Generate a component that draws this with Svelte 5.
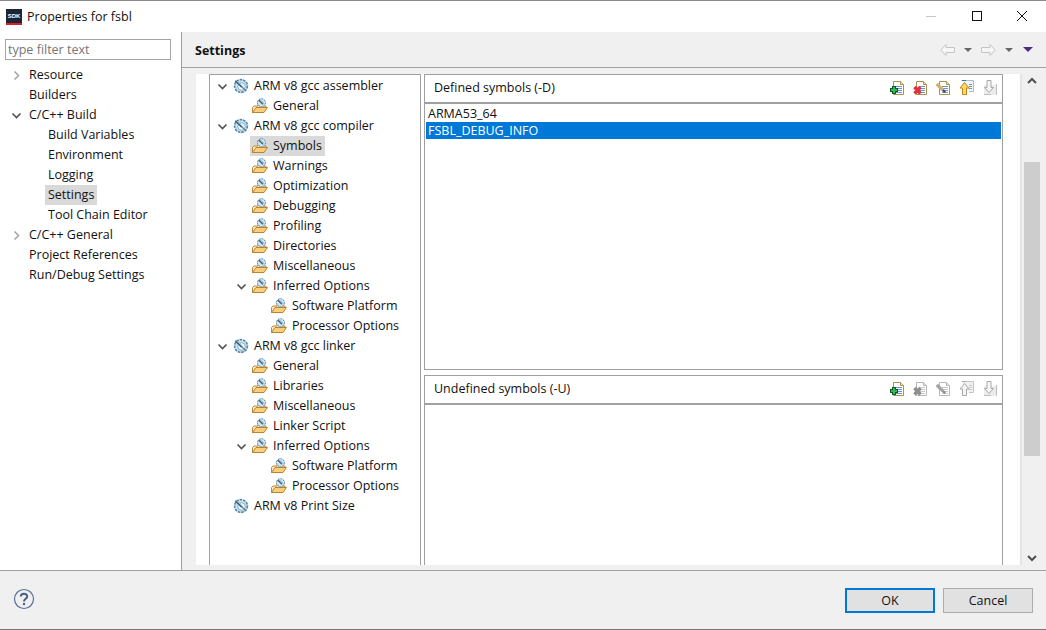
<script>
  const side = [
    { t: 'Resource', l: 0, c: 'r' }, { t: 'Builders', l: 0 }, { t: 'C/C++ Build', l: 0, c: 'd' },
    { t: 'Build Variables', l: 1 }, { t: 'Environment', l: 1 }, { t: 'Logging', l: 1 },
    { t: 'Settings', l: 1, s: true }, { t: 'Tool Chain Editor', l: 1 },
    { t: 'C/C++ General', l: 0, c: 'r' }, { t: 'Project References', l: 0 }, { t: 'Run/Debug Settings', l: 0 }
  ];
  const tree = [
    { t: 'ARM v8 gcc assembler', l: 0, c: 1, i: 'tool' }, { t: 'General', l: 1 },
    { t: 'ARM v8 gcc compiler', l: 0, c: 1, i: 'tool' }, { t: 'Symbols', l: 1, s: true }, { t: 'Warnings', l: 1 },
    { t: 'Optimization', l: 1 }, { t: 'Debugging', l: 1 }, { t: 'Profiling', l: 1 }, { t: 'Directories', l: 1 },
    { t: 'Miscellaneous', l: 1 }, { t: 'Inferred Options', l: 1, c: 1 }, { t: 'Software Platform', l: 2 }, { t: 'Processor Options', l: 2 },
    { t: 'ARM v8 gcc linker', l: 0, c: 1, i: 'tool' }, { t: 'General', l: 1 }, { t: 'Libraries', l: 1 }, { t: 'Miscellaneous', l: 1 },
    { t: 'Linker Script', l: 1 }, { t: 'Inferred Options', l: 1, c: 1 }, { t: 'Software Platform', l: 2 }, { t: 'Processor Options', l: 2 },
    { t: 'ARM v8 Print Size', l: 0, i: 'tool' }
  ];
</script>

{#snippet chev(kind)}
  <svg class="chev" width="11" height="11" viewBox="0 0 11 11">
    {#if kind === 'r'}
      <path d="M3.5 1.5 L7.5 5.5 L3.5 9.5" fill="none" stroke="#a6a6a6" stroke-width="1.6" />
    {:else}
      <path d="M1.5 3.5 L5.5 7.5 L9.5 3.5" fill="none" stroke="#505050" stroke-width="1.6" />
    {/if}
  </svg>
{/snippet}

{#snippet toolIcon()}
  <svg width="16" height="16" viewBox="0 0 16 16">
    <circle cx="8" cy="8" r="6.4" fill="#cfe2ee" stroke="#4f8bb0" stroke-width="1.6" stroke-dasharray="2.6 .9" />
    <circle cx="8.5" cy="8.5" r="3.8" fill="#f4f8fb" stroke="#86aec8" />
    <path d="M2.5 2.5 L9 9" stroke="#3f6482" stroke-width="2.2" />
    <path d="M3 2 L9.5 8.5" stroke="#c4d4e0" stroke-width=".7" />
    <path d="M9 9 L12.5 12.5" stroke="#6d8296" stroke-width="1.3" />
  </svg>
{/snippet}

{#snippet catIcon()}
  <svg width="16" height="16" viewBox="0 0 16 16">
    <path d="M.5 14.5 V9.5 L2 8 H6 V5 H12 V8 H14 V10 L11.5 14.5 Z" fill="#fde9c0" stroke="#b98a3c" />
    <path d="M.5 14.5 L4 9.5 H15.5 L12 14.5 Z" fill="#fbce7e" stroke="#b8842f" />
    <circle cx="9.5" cy="4.7" r="4" fill="#d5e5ef" stroke="#4f8bb0" stroke-dasharray="1.9 .7" />
    <path d="M6.8 2 L11 6.2" stroke="#3f6482" stroke-width="1.6" />
    <path d="M9 2.2 L12.2 5.4" stroke="#8fb0c8" stroke-width=".8" />
  </svg>
{/snippet}

{#snippet doc(dim)}
  <path d="M3.5 1.5 H10.5 L13.5 4.5 V14.5 H3.5 Z" fill="#fff" stroke={dim ? '#b8b8b8' : '#ad8f4e'} />
  <path d="M10.5 1.5 V4.5 H13.5" fill={dim ? '#e2e2e2' : '#f2dd9c'} stroke={dim ? '#b8b8b8' : '#ad8f4e'} />
  <path d="M6 6.5 H12 M6 8.5 H12 M6 10.5 H12 M6 12.5 H12" stroke={dim ? '#c8c8c8' : '#7096c6'} />
{/snippet}

{#snippet addIcon()}
  <svg width="16" height="16" viewBox="0 0 16 16">
    {@render doc(false)}
    <path d="M4 6 V14 M0 10 H8" stroke="#0f5a26" stroke-width="4" />
    <path d="M4 7 V13 M1 10 H7" stroke="#35b956" stroke-width="2" />
  </svg>
{/snippet}

{#snippet delIcon(dim)}
  <svg width="16" height="16" viewBox="0 0 16 16">
    {@render doc(dim)}
    <path d="M1.5 7 L7.5 13.5 M7.5 7 L1.5 13.5" stroke={dim ? '#8e8e8e' : '#e2323f'} stroke-width="3.4" />
  </svg>
{/snippet}

{#snippet editIcon(dim)}
  <svg width="16" height="16" viewBox="0 0 16 16">
    {@render doc(dim)}
    <path d="M.8 4 L7 10.2" stroke={dim ? '#a4a4a4' : '#d3ad6a'} stroke-width="3.2" />
    <path d="M7 10.2 L9.2 12.2" stroke={dim ? '#8a8a8a' : '#4a4a4a'} stroke-width="2.4" />
  </svg>
{/snippet}

{#snippet upIcon(dim)}
  <svg width="16" height="16" viewBox="0 0 16 16">
    <path d="M2.5 .5 H14.5 V11.5 H10" fill={dim ? '#f0f0f0' : '#eef3f9'} stroke={dim ? '#c4c4c4' : '#a9bdd2'} />
    <path d="M3 .5 H7" stroke={dim ? '#aaa' : '#3f6ea8'} />
    <path d="M10 4.5 H13 M10 6.5 H13 M10 8.5 H13" stroke={dim ? '#ccc' : '#7096c6'} />
    <path d="M5.5 2.5 L10 8 H7.5 V14.5 H3.5 V8 H1 Z" fill={dim ? '#f4f4f4' : '#fdd66a'} stroke={dim ? '#a8a8a8' : '#c4850f'} />
  </svg>
{/snippet}

{#snippet downIcon()}
  <svg width="16" height="16" viewBox="0 0 16 16">
    <rect x="2" y="5" width="13" height="10" fill="#ececec" />
    <path d="M14.5 4 V14.5 M2 14.5 H9" stroke="#bdbdbd" />
    <path d="M5 .5 H9 V7.5 H11.5 L7 12.5 L2.5 7.5 H5 Z" fill="#f6f6f6" stroke="#a8a8a8" />
  </svg>
{/snippet}

{#snippet arrow(dir)}
  <svg width="15" height="12" viewBox="0 0 15 12">
    {#if dir === 'l'}
      <path d="M6 .5 L.8 6 L6 11.5 V8.5 H14.5 V3.5 H6 Z" fill="#f6f6f6" stroke="#c4c4c4" />
    {:else}
      <path d="M9 .5 L14.2 6 L9 11.5 V8.5 H.5 V3.5 H9 Z" fill="#f6f6f6" stroke="#c4c4c4" />
    {/if}
  </svg>
{/snippet}

<div class="window">
  <header class="title">
    <div class="logo"><span>SDK</span></div>
    <span class="title-text">Properties for fsbl</span>
    <div class="caption">
      <svg width="46" height="30" viewBox="0 0 46 30"><path d="M18 14.5 H28" stroke="#c8c8c8" /></svg>
      <svg width="46" height="30" viewBox="0 0 46 30"><rect x="18.5" y="9.5" width="9" height="9" fill="none" stroke="#111" /></svg>
      <svg width="46" height="30" viewBox="0 0 46 30"><path d="M17 9 L27 19 M27 9 L17 19" stroke="#111" /></svg>
    </div>
  </header>

  <div class="main">
    <aside class="side">
      <input class="filter" placeholder="type filter text" />
      <ul class="side-tree">
        {#each side as n}
          <li class="side-row" class:deep={n.l === 1}>
            <span class="twist">{#if n.c}{@render chev(n.c)}{/if}</span>
            <span class="lbl" class:sel={n.s}>{n.t}</span>
          </li>
        {/each}
      </ul>
    </aside>

    <section class="content">
      <div class="head">
        <h1>Settings</h1>
        <div class="nav">
          {@render arrow('l')}
          <i class="tri"></i>
          {@render arrow('r')}
          <i class="tri"></i>
          <i class="tri big"></i>
        </div>
      </div>

      <div class="pane-wrap">
        <div class="pane">
          <div class="tree-box">
            {#each tree as n}
              <div class="t-row l{n.l}">
                <span class="twist2">{#if n.c}{@render chev('d')}{/if}</span>
                <span class="t-item" class:sel={n.s}>
                  {#if n.i}{@render toolIcon()}{:else}{@render catIcon()}{/if}
                  <span>{n.t}</span>
                </span>
              </div>
            {/each}
          </div>

          <div class="lists">
            <div class="group first">
              <div class="bar">
                <span>Defined symbols (-D)</span>
                <div class="tools">
                  {@render addIcon()}{@render delIcon(false)}{@render editIcon(false)}{@render upIcon(false)}{@render downIcon()}
                </div>
              </div>
              <div class="list">
                <div class="item">ARMA53_64</div>
                <div class="item on">FSBL_DEBUG_INFO</div>
              </div>
            </div>
            <div class="group second">
              <div class="bar">
                <span>Undefined symbols (-U)</span>
                <div class="tools">
                  {@render addIcon()}{@render delIcon(true)}{@render editIcon(true)}{@render upIcon(true)}{@render downIcon()}
                </div>
              </div>
              <div class="list"></div>
            </div>
          </div>
        </div>

        <div class="scroll">
          <svg width="16" height="14" viewBox="0 0 16 14"><path d="M4 9 L8 5 L12 9" fill="none" stroke="#505050" stroke-width="2" /></svg>
          <div class="track"><div class="thumb"></div></div>
          <svg width="16" height="14" viewBox="0 0 16 14"><path d="M4 5 L8 9 L12 5" fill="none" stroke="#505050" stroke-width="2" /></svg>
        </div>
      </div>
    </section>
  </div>

  <footer class="foot">
    <svg class="help" width="22" height="22" viewBox="0 0 22 22">
      <circle cx="11" cy="11" r="9.5" fill="none" stroke="#5a7096" stroke-width="1.2" />
      <path d="M7.8 8.5 C7.8 4.8 14.2 4.8 14.2 8.4 C14.2 10.8 11 10.8 11 13.4" fill="none" stroke="#4a5f85" stroke-width="2" />
      <circle cx="11" cy="16" r="1.2" fill="#4a5f85" />
    </svg>
    <div class="btns">
      <button class="ok">OK</button>
      <button>Cancel</button>
    </div>
  </footer>
</div>

<style>
  :global(body) { margin: 0; background: #fff; overflow: hidden; }
  .window {
    width: 1046px; height: 630px; display: flex; flex-direction: column; box-sizing: border-box;
    font: 12.5px/20px "Open Sans", "Noto Sans", sans-serif; color: #111;
    border-top: 1px solid #8a8a8a; border-bottom: 1px solid #7a7a7a; padding-top: 1px;
    overflow: hidden;
  }
  .title { height: 30px; display: flex; align-items: center; flex: none; padding-left: 6px; }
  .logo { width: 16px; height: 16px; background: #1e2433; border-bottom: 2px solid #d81f2c; box-sizing: border-box; display: flex; align-items: center; justify-content: center; margin-right: 5px; }
  .logo span { font: bold 6px/8px "Liberation Sans", sans-serif; color: #fff; }
  .title-text { flex: 1; }
  .caption { display: flex; }
  .caption svg { display: block; }

  .main { flex: 1; display: flex; min-height: 0; }
  .side { width: 176px; flex: none; border-right: 1px solid #a0a0a0; padding: 7px 0 0 5px; }
  .filter { width: 166px; height: 21px; box-sizing: border-box; display: block; border: 1px solid #a5a5a5; padding: 0 2px; font: inherit; outline: none; margin: 0; }
  .filter::placeholder { color: #767676; opacity: 1; }
  .side-tree { list-style: none; margin: 5px 0 0; padding: 0; }
  .side-row { height: 20px; display: flex; align-items: center; }
  .side-row.deep { padding-left: 19px; }
  .twist { width: 24px; flex: none; display: flex; padding-left: 6px; box-sizing: border-box; }
  .lbl.sel { background: #d9d9d9; padding: 0 3px; margin-left: -3px; }
  .chev { display: block; }

  .content { flex: 1; min-width: 0; display: flex; flex-direction: column; background: #f0f0f0; }
  .head { height: 35px; flex: none; border-bottom: 1px solid #a0a0a0; display: flex; align-items: center; padding-left: 13px; }
  .head h1 { font-size: 12.5px; font-weight: 700; margin: 2px 0 0; flex: 1; }
  .nav { display: flex; align-items: center; gap: 9px; padding-right: 13px; }
  .nav svg { display: block; }
  .tri { width: 0; height: 0; border: 4px solid transparent; border-top: 4px solid #666; border-bottom: 0; }
  .tri.big { border-top-color: #4b2e80; border-width: 5px 5px 0; margin-left: 1px; }

  .pane-wrap { flex: 1; min-height: 0; display: flex; padding: 6px 0 5px 14px; }
  .pane { width: 826px; flex: none; background: #fff; display: flex; padding-left: 13px; box-sizing: border-box; overflow: hidden; border-right: 2px solid #e4e4e4; }
  .tree-box { width: 212px; flex: none; box-sizing: border-box; border: 1px solid #a0a0a0; border-bottom: 0; padding-top: 1px; }
  .t-row { height: 20px; display: flex; align-items: center; }
  .twist2 { width: 21px; flex: none; display: flex; padding-left: 7px; box-sizing: border-box; }
  .t-row.l1 { padding-left: 19px; }
  .t-row.l2 { padding-left: 38px; }
  .t-item { display: flex; align-items: center; gap: 5px; height: 20px; padding: 0 3px 0 2px; }
  .t-row.l0 .t-item { margin-left: 0; }
  .t-item.sel { background: #d9d9d9; }
  .t-item svg { display: block; flex: none; }

  .lists { width: 579px; margin-left: 3px; flex: none; display: flex; flex-direction: column; gap: 5px; }
  .group { display: flex; flex-direction: column; border: 1px solid #a0a0a0; border-bottom: 0; box-sizing: border-box; }
  .group.first { height: 296px; border-bottom: 1px solid #a0a0a0; }
  .group.second { flex: 1; }
  .bar { height: 25px; padding: 0 0 2px 9px; flex: none; display: flex; align-items: center; border-bottom: 2px solid #a0a0a0; }
  .bar > span { flex: 1; }
  .tools { display: flex; gap: 7px; padding-right: 4px; }
  .tools svg { display: block; }
  .list { flex: 1; padding: 1px 1px 0; }
  .item { height: 17px; line-height: 17px; padding-left: 2px; }
  .item.on { background: #0078d7; color: #fff; }

  .scroll { width: 16px; margin-left: 2px; display: flex; flex-direction: column; background: #f0f0f0; }
  .scroll svg { display: block; flex: none; }
  .track { flex: 1; padding-top: 74px; }
  .thumb { height: 294px; background: #cdcdcd; }

  .foot { height: 59px; flex: none; box-sizing: border-box; background: #f0f0f0; border-top: 1px solid #a0a0a0; display: flex; align-items: center; padding: 1px 13px 0; }
  .help { flex: none; margin-bottom: 3px; }
  .btns { margin-left: auto; display: flex; gap: 8px; }
  button { width: 90px; height: 25px; background: #e1e1e1; border: 1px solid #adadad; font: inherit; color: #111; padding: 0; }
  button.ok { border: 2px solid #0078d7; }
</style>
